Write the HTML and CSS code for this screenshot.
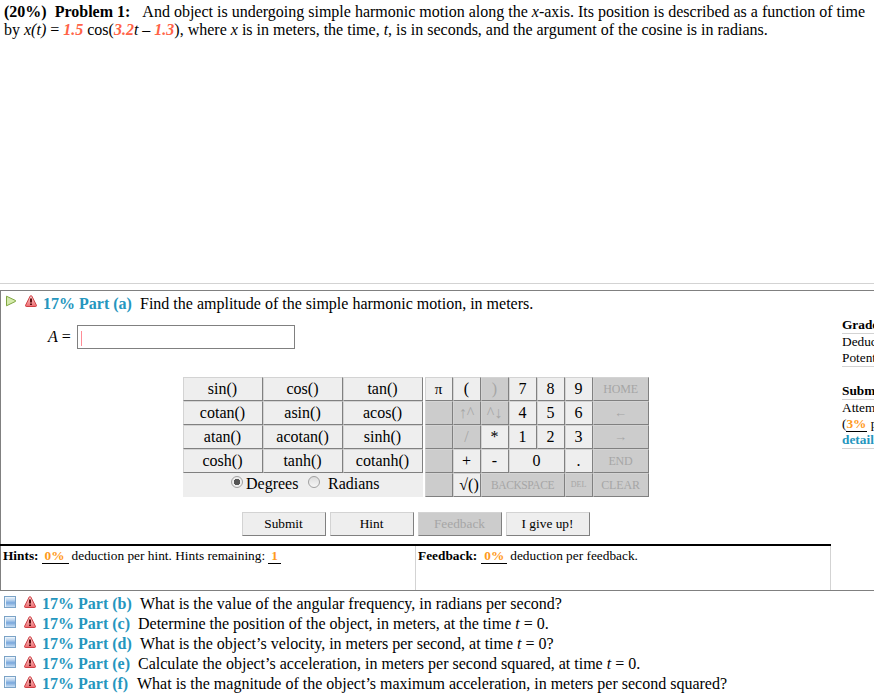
FILE: index.html
```
<!DOCTYPE html>
<html lang="en">
<head>
<meta charset="utf-8">
<title>Simple harmonic motion</title>
<link rel="stylesheet" href="styles.css">
</head>
<body>
<svg class="defs" width="0" height="0" aria-hidden="true">
  <defs>
    <linearGradient id="blue" x1="0" y1="0" x2="0" y2="1"><stop offset="0" stop-color="#eef5fc"/><stop offset=".3" stop-color="#c2d8ef"/><stop offset=".58" stop-color="#78a7dc"/><stop offset="1" stop-color="#d5e6f6"/></linearGradient>
    <linearGradient id="red" x1="0" y1="0" x2="0" y2="1"><stop offset="0" stop-color="#f9d0d0"/><stop offset="1" stop-color="#ee6c70"/></linearGradient>
    <symbol id="warn" viewBox="0 0 12 12"><path d="M5.2 1Q6 0 6.8 1L11.4 10.2Q11.6 11.5 10.8 11.5H1.2Q.4 11.5.6 10.2Z" fill="url(#red)" stroke="#cf4045"/><path d="M5 3.5h2v4H5zM5 8.5h2v1.5H5z" fill="#5d1012"/></symbol>
    <symbol id="square" viewBox="0 0 12 12"><rect x=".5" y=".5" width="11" height="11" fill="url(#blue)" stroke="#7ba3c7"/><path d="M1.5 11V1.5H11" fill="none" stroke="#eaf3fb"/></symbol>
  </defs>
</svg>
<main>
  <section class="problem">
    <p class="p1"><b>(20%)</b><b class="num">Problem 1:</b><span class="lead">And object is undergoing simple harmonic motion along the <i>x</i>-axis. Its position is described as a function of time</span></p>
    <p class="p2">by <i>x(t)</i> = <i class="var">1.5</i> cos(<i class="var">3.2</i><i>t</i> – <i class="var">1.3</i>), where <i>x</i> is in meters, the time, <i>t</i>, is in seconds, and the argument of the cosine is in radians.</p>
  </section>
  <section class="active">
    <div class="work">
      <div class="part first">
        <svg class="play" viewBox="0 0 12 12"><path d="M1.5 1.2v9.6L10.5 6.4V5.5Z" fill="#d5ebac" stroke="#7fa641" stroke-linejoin="round"/></svg>
        <svg class="warn"><use href="#warn"/></svg>
        <b class="label la">17% Part (a)</b><span class="q qa">Find the amplitude of the simple harmonic motion, in meters.</span>
      </div>
      <div class="answer"><span><i>A</i> =</span><div class="field"><span class="caret"></span></div></div>
      <div class="pads">
        <div class="trig">
          <span class="key">sin()</span><span class="key">cos()</span><span class="key">tan()</span>
          <span class="key">cotan()</span><span class="key">asin()</span><span class="key">acos()</span>
          <span class="key">atan()</span><span class="key">acotan()</span><span class="key">sinh()</span>
          <span class="key">cosh()</span><span class="key">tanh()</span><span class="key">cotanh()</span>
          <div class="mode"><span class="radio on"></span><span class="deg">Degrees</span><span class="radio"></span><span class="rad">Radians</span></div>
        </div>
        <div class="numpad">
          <span class="key pi">π</span><span class="key">(</span><span class="key off">)</span><span class="key">7</span><span class="key">8</span><span class="key">9</span><span class="key off word">HOME</span>
          <span class="key off"></span><span class="key off">↑^</span><span class="key off">^↓</span><span class="key">4</span><span class="key">5</span><span class="key">6</span><span class="key off arrow">←</span>
          <span class="key off"></span><span class="key off">/</span><span class="key">*</span><span class="key">1</span><span class="key">2</span><span class="key">3</span><span class="key off arrow">→</span>
          <span class="key off"></span><span class="key">+</span><span class="key">-</span><span class="key two">0</span><span class="key">.</span><span class="key off word">END</span>
          <span class="key off"></span><span class="key root">√()</span><span class="key off word three">BACKSPACE</span><span class="key off del">DEL</span><span class="key off word">CLEAR</span>
        </div>
      </div>
      <div class="actions"><span class="key">Submit</span><span class="key">Hint</span><span class="key off">Feedback</span><span class="key">I give up!</span></div>
      <div class="notes">
        <div class="hints"><b>Hints:</b><b class="pct">0%</b><span class="ded">deduction per hint. Hints remaining:</span><b class="pct one">1</b></div>
        <div class="feedback"><b>Feedback:</b><b class="pct">0%</b><span class="ded">deduction per feedback.</span></div>
      </div>
    </div>
    <aside>
      <div class="s1"><b>Grade</b></div>
      <div class="s2">Deduc<br>Potent</div>
      <div class="s3"><b>Subm</b></div>
      <div class="s4">Attem<br>(<b class="rate">3%</b> p<br><b class="more">detail</b></div>
    </aside>
  </section>
  <section class="list">
    <div class="part"><svg class="sq"><use href="#square"/></svg><svg class="warn"><use href="#warn"/></svg><b class="label lb">17% Part (b)</b><span class="q qb">What is the value of the angular frequency, in radians per second?</span></div>
    <div class="part"><svg class="sq"><use href="#square"/></svg><svg class="warn"><use href="#warn"/></svg><b class="label lc">17% Part (c)</b><span class="q qc">Determine the position of the object, in meters, at the time <i>t</i> = 0.</span></div>
    <div class="part"><svg class="sq"><use href="#square"/></svg><svg class="warn"><use href="#warn"/></svg><b class="label lb">17% Part (d)</b><span class="q qd">What is the object’s velocity, in meters per second, at time <i>t</i> = 0?</span></div>
    <div class="part"><svg class="sq"><use href="#square"/></svg><svg class="warn"><use href="#warn"/></svg><b class="label lc">17% Part (e)</b><span class="q qe">Calculate the object’s acceleration, in meters per second squared, at time <i>t</i> = 0.</span></div>
    <div class="part"><svg class="sq"><use href="#square"/></svg><svg class="warn"><use href="#warn"/></svg><b class="label lf">17% Part (f)</b><span class="q qf">What is the magnitude of the object’s maximum acceleration, in meters per second squared?</span></div>
  </section>
</main>
</body>
</html>
```

FILE: styles.css
```
* { box-sizing: border-box; }
body { margin: 0; background: #fff; color: #000; font: 16px/18px "Liberation Serif", "Times New Roman", serif; overflow: hidden; }
main { width: 874px; height: 696px; overflow: hidden; white-space: nowrap; }
p { margin: 0; }
.defs { display: block; }
.problem { height: 284px; padding: 3px 0 0 4px; border-bottom: 1px solid #d3d3d3; }
.p1 { display: flex; }
.num { margin-left: 8px; }
.lead { margin-left: 12px; }
.var { color: #ff6347; font-weight: bold; }
.active { display: flex; height: 301px; margin-top: 6px; border: 1px solid #808080; border-right: 0; }
.work { width: 830px; flex: none; display: flex; flex-direction: column; }
.part { display: flex; height: 20px; padding-left: 4px; line-height: 18px; }
.part svg { width: 12px; height: 12px; flex: none; }
.sq { margin-top: 1px; }
.part .warn { margin: 1px 0 0 8px; }
.label { color: #2596be; margin-left: 6px; width: 98px; flex: none; }
.label.la { width: 97px; }
.label.lc { width: 96px; }
.label.lf { width: 95px; }
.first { height: 33px; padding: 3px 0 0 4px; line-height: 20px; }
.first .play { margin-top: 1px; }
.answer { display: flex; height: 24px; margin-top: 1px; padding-left: 47px; line-height: 24px; }
.answer > span { width: 29px; }
.field { width: 218px; height: 24px; border: 1px solid #808080; padding: 5px 0 0 3px; }
.caret { display: block; width: 1px; height: 15px; background: #ff8c96; }
.pads { display: flex; gap: 2px; margin: 28px 0 0 182px; }
.trig { display: grid; grid-template-columns: repeat(3, 80px); grid-template-rows: repeat(5, 24px); background: #eee; }
.numpad { display: grid; grid-template-columns: repeat(6, 28px) 56px; grid-template-rows: repeat(5, 24px); }
.key { background: #eee; border: 1px solid; border-color: #d3d3d3 #808080 #808080 #d3d3d3; text-align: center; line-height: 22px; overflow: hidden; }
.trig .key, .numpad .key { padding-right: 1px; }
.off { background: #ccc; color: #a6a6a6; }
.word { font-size: 12px; letter-spacing: -.15px; }
.word.three { font-size: 11.5px; letter-spacing: -.4px; }
.arrow { font-size: 13px; }
.del { font-size: 8px; }
.pi { font-size: 15px; }
.numpad .root { padding: 0 0 0 4px; }
.two { grid-column: span 2; }
.three { grid-column: span 3; }
.mode { grid-column: span 3; display: flex; padding-left: 48px; line-height: 22px; }
.radio { width: 12px; height: 12px; margin-top: 3px; border: 1px solid #a0a0a0; border-radius: 50%; background: linear-gradient(#ddd, #f6f6f6); }
.radio.on { background: radial-gradient(circle, #555 0 3px, #eee 3.5px); }
.deg { margin-left: 3px; width: 62px; }
.rad { margin-left: 8px; }
.actions { display: flex; gap: 4px; margin: 15px 0 0 241px; font-size: 13.33px; }
.actions .key { width: 84px; height: 24px; line-height: 22px; padding-right: 1px; }
.notes { display: flex; height: 46px; margin: 8px 0 0 -1px; width: 831px; border-top: 2px solid #000; font-size: 13.33px; line-height: 16px; }
.notes > div { display: flex; padding: 2px 0 0 3px; border-right: 1px solid #d3d3d3; width: 416px; }
.notes .feedback { width: 415px; padding-left: 2px; }
.pct { color: #ff9a1c; border-bottom: 1px solid #000; height: 16px; width: 27px; margin-left: 3px; padding-left: 3px; }
.feedback .pct { width: 26px; margin-left: 4px; }
.pct.one { width: 13px; }
.ded { margin-left: 3px; }
aside { width: 32px; flex: none; margin-left: 11px; padding-top: 26px; font-size: 13.33px; line-height: 16px; overflow: hidden; }
aside > div { border-bottom: 1px solid #d3d3d3; }
.s1 { height: 17px; }
.s2 { height: 33px; }
.s3 { height: 33px; padding-top: 16px; }
.s4 { height: 49px; }
.rate { color: #ff9a1c; border-bottom: 1px solid #000; padding-right: 1px; }
.more { color: #2596be; }
.list { padding-top: 4px; }
```
